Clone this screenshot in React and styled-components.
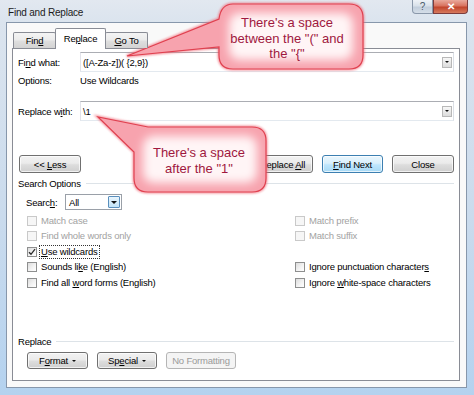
import React from "react";
import styled, { createGlobalStyle } from "styled-components";

const GlobalStyle = createGlobalStyle`
  html, body { margin: 0; padding: 0; }
  body {
    width: 474px;
    height: 395px;
    overflow: hidden;
    background: #bcd3ea;
    font-family: "Liberation Sans", Arial, sans-serif;
    font-size: 9.5px;
    letter-spacing: -0.2px;
    color: #000;
  }
`;

const Window = styled.div`
  position: relative;
  width: 474px;
  height: 395px;
  display: flex;
  flex-direction: column;
  box-sizing: border-box;
  background: linear-gradient(180deg, #e2e8f0 0px, #dbe4ee 22px, #cadbed 55%, #b4d2ef 100%);
`;

const TitleBar = styled.div`
  height: 22px;
  flex: none;
  display: flex;
  padding-left: 8px;
`;

const Title = styled.div`
  align-self: center;
  margin-top: 2px;
  font-size: 10px;
  color: #1b1b1b;
`;

const Caption = styled.div`
  margin-left: auto;
  margin-right: 6px;
  display: flex;
  align-self: flex-start;
`;

const CaptionButton = styled.div`
  width: ${p => p.$w}px;
  height: 14px;
  box-sizing: border-box;
  display: flex;
  align-items: center;
  justify-content: center;
  border: 1px solid ${p => (p.$close ? "#7d3c3c" : "#8a98aa")};
  border-top: none;
  border-radius: ${p => (p.$close ? "0 0 4px 0" : "0 0 0 4px")};
  background: ${p =>
    p.$close
      ? "linear-gradient(180deg, #e9a99c 0%, #d8735f 45%, #c2452c 55%, #d67a5e 100%)"
      : "linear-gradient(180deg, #eef2f7 0%, #d9e1ea 45%, #c2cedc 55%, #d5dee8 100%)"};
  color: ${p => (p.$close ? "#fff" : "#4c5a6b")};
  font-size: 10px;
  font-weight: ${p => (p.$close ? "bold" : "normal")};
`;

const Client = styled.div`
  flex: 1;
  margin: 0 7px 7px 6px;
  border: 1px solid #8797ab;
  background: #f9f9f9;
  display: flex;
  flex-direction: column;
  padding: 5px 6px 6px 5px;
  min-height: 0;
`;

const Tabs = styled.div`
  height: 20px;
  display: flex;
  align-items: flex-end;
  padding-left: 2px;
  flex: none;
`;

const Tab = styled.div`
  position: relative;
  z-index: ${p => (p.$active ? 2 : 1)};
  width: ${p => p.$w}px;
  height: ${p => (p.$active ? 21 : 16)}px;
  margin-bottom: ${p => (p.$active ? -1 : 0)}px;
  margin-left: -1px;
  box-sizing: border-box;
  border: 1px solid #898c95;
  border-bottom: none;
  border-radius: 2px 2px 0 0;
  display: flex;
  align-items: center;
  justify-content: center;
  padding-bottom: ${p => (p.$active ? 2 : 0)}px;
  background: ${p =>
    p.$active
      ? "#fff"
      : "linear-gradient(180deg, #f4f4f4 0%, #ececec 45%, #dedede 55%, #d3d3d3 100%)"};
`;

const Panel = styled.div`
  flex: 1;
  border: 1px solid #898c95;
  background: #fff;
  padding: 3px 5px 0 5px;
  display: flex;
  flex-direction: column;
  min-height: 0;
`;

const FieldRow = styled.div`
  display: flex;
  align-items: center;
  height: ${p => p.$h}px;
  margin-top: ${p => p.$mt || 0}px;
  flex: none;
`;

const FieldLabel = styled.div`
  width: 62px;
  flex: none;
`;

const TextBox = styled.div`
  flex: 1;
  height: 20px;
  box-sizing: border-box;
  border: 1px solid;
  border-color: #abadb3 #dbdfe6 #e3e9ef #e2e3ea;
  display: flex;
  align-items: center;
  padding-left: 2px;
  background: #fff;
  white-space: pre;
`;

const DropButton = styled.div`
  margin-left: auto;
  margin-right: 1px;
  width: 10px;
  height: 11px;
  box-sizing: border-box;
  border: 1px solid #b8b8b8;
  background: linear-gradient(180deg, #f7f7f7, #dcdcdc);
  display: flex;
  align-items: center;
  justify-content: center;
`;

const Arrow = styled.span`
  width: 0;
  height: 0;
  border-left: ${p => p.$s || 3}px solid transparent;
  border-right: ${p => p.$s || 3}px solid transparent;
  border-top: ${p => p.$s || 3}px solid #111;
  margin-left: ${p => p.$ml || 0}px;
`;

const ButtonRow = styled.div`
  display: flex;
  align-items: center;
  margin-top: ${p => p.$mt}px;
  padding-left: ${p => p.$pl}px;
  gap: 9px;
  flex: none;
`;

const RightGroup = styled.div`
  margin-left: auto;
  display: flex;
  gap: 9px;
`;

const Button = styled.button`
  width: ${p => p.$w}px;
  height: ${p => p.$h}px;
  box-sizing: border-box;
  padding: 0;
  font: inherit;
  letter-spacing: inherit;
  color: #000;
  display: flex;
  align-items: center;
  justify-content: center;
  white-space: pre;
  visibility: ${p => (p.$covered ? "hidden" : "visible")};
  border-radius: 3px;
  border: 1px solid ${p => (p.$default ? "#3c7fb1" : "#707070")};
  background: ${p =>
    p.$default
      ? "linear-gradient(180deg, #eaf6fd 0%, #d9f0fc 45%, #bee6fd 55%, #a7d9f5 100%)"
      : "linear-gradient(180deg, #f2f2f2 0%, #ebebeb 45%, #dddddd 55%, #cfcfcf 100%)"};
  box-shadow: inset 0 0 0 1px rgba(255, 255, 255, 0.7);

  &:disabled {
    border-color: #b5b5b5;
    background: #f4f4f4;
    color: #9a9a9a;
    box-shadow: none;
  }
`;

const SectionHead = styled.div`
  display: flex;
  align-items: center;
  height: 12px;
  margin-top: ${p => p.$mt}px;
  flex: none;

  &::after {
    content: "";
    flex: 1;
    height: 1px;
    margin-left: 5px;
    background: #dde3e8;
  }
`;

const SearchRow = styled.div`
  display: flex;
  align-items: center;
  height: 16px;
  margin-top: 5px;
  padding-left: 8px;
  flex: none;
`;

const SearchLabel = styled.div`
  width: 39px;
`;

const Select = styled.div`
  width: 57px;
  height: 16px;
  box-sizing: border-box;
  border: 1px solid #9aa0a8;
  display: flex;
  align-items: center;
  padding-left: 3px;
  background: #fff;
`;

const SelectButton = styled.div`
  margin-left: auto;
  margin-right: 1px;
  width: 12px;
  height: 12px;
  box-sizing: border-box;
  border: 1px solid #5a8fbd;
  border-radius: 1px;
  background: linear-gradient(180deg, #e9f5fd, #c2e3f7);
  display: flex;
  align-items: center;
  justify-content: center;
`;

const CheckGrid = styled.div`
  display: grid;
  grid-template-columns: 268px 1fr;
  grid-auto-rows: 15.5px;
  margin-top: 3px;
  padding-left: 9px;
  flex: none;
`;

const CheckRow = styled.div`
  display: flex;
  align-items: center;
`;

const Box = styled.div`
  width: 10px;
  height: 10px;
  box-sizing: border-box;
  flex: none;
  border: 1px solid ${p => (p.$disabled ? "#c9c9c9" : "#8e8f8f")};
  background: ${p =>
    p.$disabled ? "#f6f6f6" : "linear-gradient(135deg, #dcdcdc 0%, #f4f4f4 60%, #ffffff 100%)"};
  display: flex;
  align-items: center;
  justify-content: center;
`;

const CheckLabel = styled.div`
  margin-left: 2px;
  padding: 0 1px;
  line-height: 12px;
  border: 1px ${p => (p.$focused ? "dotted #333" : "solid transparent")};
  color: ${p => (p.$disabled ? "#a2a2a2" : "#000")};
`;

const Callout = styled.div`
  position: absolute;
  left: ${p => p.$x}px;
  top: ${p => p.$y}px;
  width: ${p => p.$w}px;
  text-align: center;
  font-size: 13px;
  line-height: 15.5px;
  letter-spacing: 0;
  color: #a0183e;
  pointer-events: none;
`;

const Overlay = styled.svg`
  position: absolute;
  left: 0;
  top: 0;
  pointer-events: none;
`;

const checks = [
  { label: "Match case", disabled: true },
  { label: "Match prefix", disabled: true },
  { label: "Find whole words only", disabled: true },
  { label: "Match suffix", disabled: true },
  { label: <><u>U</u>se wildcards</>, checked: true, focused: true },
  null,
  { label: <>Sounds li<u>k</u>e (English)</> },
  { label: <>Ignore punctuation character<u>s</u></> },
  { label: <>Find all <u>w</u>ord forms (English)</> },
  { label: <>Ignore <u>w</u>hite-space characters</> },
];

const CheckItem = ({ label, checked, disabled, focused }) => (
  <CheckRow>
    <Box $disabled={disabled}>
      {checked && (
        <svg width="8" height="8" viewBox="0 0 8 8">
          <path d="M1 4.2 L3 6.3 L7 1.2" fill="none" stroke="#2a2a2a" strokeWidth="1.3" />
        </svg>
      )}
    </Box>
    <CheckLabel $disabled={disabled} $focused={focused}>{label}</CheckLabel>
  </CheckRow>
);

// callout outlines: rounded box plus a wedge pointing at the typed text
const bubble1 =
  "M233 4 H349 Q363 4 363 18 V55 Q363 69 349 69 H233 Q219 69 219 55 V47 L127 56 L219 19 Q221 4 233 4 Z";
const bubble2 =
  "M148 127 H252 Q266 127 266 141 V178 Q266 192 252 192 H148 Q134 192 134 178 V152 L98 117 L148 127 Z";

const bubbles = [
  { d: bubble1, clip: "c1", inner: [229, 13, 124, 47] },
  { d: bubble2, clip: "c2", inner: [143, 136, 114, 47] },
];

function Bubbles() {
  return (
    <Overlay width="474" height="395" viewBox="0 0 474 395">
      <defs>
        <filter id="soft" x="-20%" y="-20%" width="140%" height="140%">
          <feGaussianBlur stdDeviation="5" />
        </filter>
        <filter id="glow" x="-20%" y="-20%" width="140%" height="140%">
          <feGaussianBlur stdDeviation="1.2" />
        </filter>
        <clipPath id="c1"><path d={bubble1} /></clipPath>
        <clipPath id="c2"><path d={bubble2} /></clipPath>
      </defs>
      {bubbles.map((b, i) => (
        <g key={i}>
          <path d={b.d} fill="none" stroke="#f06a78" strokeWidth="3" filter="url(#glow)" opacity="0.7" />
          <path d={b.d} fill="#f7a3ae" />
          <g clipPath={`url(#${b.clip})`}>
            <rect
              x={b.inner[0]}
              y={b.inner[1]}
              width={b.inner[2]}
              height={b.inner[3]}
              rx="10"
              fill="#fff5f6"
              filter="url(#soft)"
            />
          </g>
          <path d={b.d} fill="none" stroke="#e0404f" strokeWidth="1.2" />
        </g>
      ))}
    </Overlay>
  );
}

export default function App() {
  return (
    <>
      <GlobalStyle />
      <Window>
        <TitleBar>
          <Title>Find and Replace</Title>
          <Caption>
            <CaptionButton $w={21}>?</CaptionButton>
            <CaptionButton $w={35} $close>✕</CaptionButton>
          </Caption>
        </TitleBar>
        <Client>
          <Tabs>
            <Tab $w={43}><span>Fin<u>d</u></span></Tab>
            <Tab $w={51} $active><span>Re<u>p</u>lace</span></Tab>
            <Tab $w={43}><span><u>G</u>o To</span></Tab>
          </Tabs>
          <Panel>
            <FieldRow $h={20}>
              <FieldLabel>Fi<u>n</u>d what:</FieldLabel>
              <TextBox>
                <span>{"([A-Za-z])( {2,9})"}</span>
                <DropButton><Arrow $s={2.5} /></DropButton>
              </TextBox>
            </FieldRow>
            <FieldRow $h={16}>
              <FieldLabel>Options:</FieldLabel>
              <div>Use Wildcards</div>
            </FieldRow>
            <FieldRow $h={20} $mt={13}>
              <FieldLabel>Replace w<u>i</u>th:</FieldLabel>
              <TextBox>
                <span>{"\\1"}</span>
                <DropButton><Arrow $s={2.5} /></DropButton>
              </TextBox>
            </FieldRow>
            <ButtonRow $mt={34} $pl={1}>
              <Button $w={62} $h={18}><span>{"<< "}<u>L</u>ess</span></Button>
              <RightGroup>
                <Button $w={61} $h={18} $covered><span><u>R</u>eplace</span></Button>
                <Button $w={61} $h={18}><span>{"Replace "}<u>A</u>ll</span></Button>
                <Button $w={61} $h={18} $default><span><u>F</u>{"ind Next"}</span></Button>
                <Button $w={62} $h={18}><span>Close</span></Button>
              </RightGroup>
            </ButtonRow>
            <SectionHead $mt={4}>Search Options</SectionHead>
            <SearchRow>
              <SearchLabel>Searc<u>h</u>:</SearchLabel>
              <Select>
                All
                <SelectButton><Arrow $s={3} /></SelectButton>
              </Select>
            </SearchRow>
            <CheckGrid>
              {checks.map((c, i) => (c ? <CheckItem key={i} {...c} /> : <div key={i} />))}
            </CheckGrid>
            <SectionHead $mt={44.5}>Replace</SectionHead>
            <ButtonRow $mt={5} $pl={9}>
              <Button $w={61} $h={17}><span>F<u>o</u>rmat</span><Arrow $s={2.5} $ml={4} /></Button>
              <Button $w={60} $h={17}><span>Sp<u>e</u>cial</span><Arrow $s={2.5} $ml={4} /></Button>
              <Button $w={70} $h={17} disabled><span>No Formatting</span></Button>
            </ButtonRow>
          </Panel>
        </Client>
        <Bubbles />
        <Callout $x={217} $y={15} $w={140}>
          {"There's a space"}<br />{'between the "(" and'}<br />{'the "{"'}
        </Callout>
        <Callout $x={134} $y={145} $w={130}>
          {"There's a space"}<br />{'after the "1"'}
        </Callout>
      </Window>
    </>
  );
}
